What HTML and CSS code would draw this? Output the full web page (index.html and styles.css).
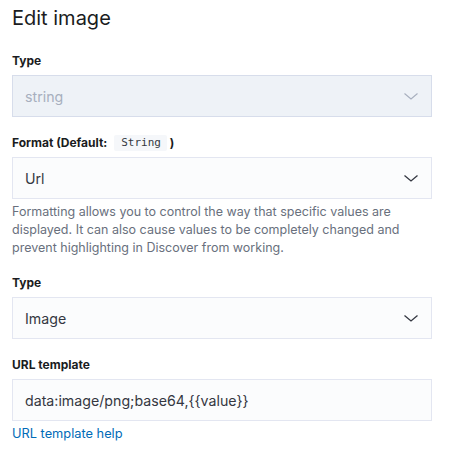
FILE: index.html
```html
<!DOCTYPE html>
<html>
<head>
<meta charset="utf-8">
<link rel="stylesheet" href="styles.css">
</head>
<body>
<div class="page">
  <h2 class="title">Edit image</h2>

  <div class="row">
    <label class="label">Type</label>
    <div class="field field-disabled">
      <span class="value">string</span>
      <svg class="chev" width="16" height="16" viewBox="0 0 16 16"><path d="M1.5 5.5 L8 11 L14.5 5.5" fill="none" stroke="currentColor" stroke-width="1.1"/></svg>
    </div>
  </div>

  <div class="row">
    <label class="label">Format (Default: <code class="code">String</code> )</label>
    <div class="field">
      <span class="value">Url</span>
      <svg class="chev" width="16" height="16" viewBox="0 0 16 16"><path d="M1.5 5.5 L8 11 L14.5 5.5" fill="none" stroke="currentColor" stroke-width="1.3"/></svg>
    </div>
    <p class="help">Formatting allows you to control the way that specific values are displayed. It can also cause values to be completely changed and prevent highlighting in Discover from working.</p>
  </div>

  <div class="row">
    <label class="label">Type</label>
    <div class="field">
      <span class="value">Image</span>
      <svg class="chev" width="16" height="16" viewBox="0 0 16 16"><path d="M1.5 5.5 L8 11 L14.5 5.5" fill="none" stroke="currentColor" stroke-width="1.3"/></svg>
    </div>
  </div>

  <div class="row">
    <label class="label">URL template</label>
    <div class="field">
      <span class="value">data:image/png;base64,{{value}}</span>
    </div>
    <a class="link" href="#">URL template help</a>
  </div>
</div>
</body>
</html>
```

FILE: styles.css
```css
html, body {
  margin: 0;
  padding: 0;
  background: #ffffff;
}

body {
  font-family: Inter, "Noto Sans", sans-serif;
  color: #343741;
}

.page {
  width: 420px;
  padding: 6px 12px 0 12px;
  display: flex;
  flex-direction: column;
}

.title {
  margin: 0 0 23px 0;
  font-size: 20px;
  line-height: 24px;
  font-weight: 400;
  color: #1a1c21;
}

.row {
  display: flex;
  flex-direction: column;
  margin-bottom: 18px;
}

.label {
  font-size: 12px;
  line-height: 16px;
  font-weight: 700;
  color: #1a1c21;
  margin-bottom: 6px;
  display: flex;
  align-items: center;
  white-space: pre;
}

.code {
  font-family: "DejaVu Sans Mono", "Liberation Mono", monospace;
  font-size: 11px;
  font-weight: 400;
  line-height: 16px;
  background: #f5f7fa;
  color: #343741;
  padding: 0 6px 0 7px;
  margin-left: 4px;
  border-radius: 2px;
}

.field {
  height: 42px;
  box-sizing: border-box;
  background: #fbfcfd;
  box-shadow: inset 0 0 0 1px rgba(17, 43, 134, 0.1);
  display: flex;
  align-items: center;
  justify-content: space-between;
  padding: 0 13px;
  font-size: 14.2px;
  color: #343741;
}

.field-disabled {
  background: #eef2f7;
  color: #a7afbe;
}

.field-disabled .chev {
  color: #a7afbe;
}

.chev {
  color: #343741;
  flex: none;
}

.help {
  margin: 4px 0 0 0;
  font-size: 12.5px;
  line-height: 18px;
  color: #69707d;
}

.link {
  margin-top: 4px;
  font-size: 12.8px;
  line-height: 18px;
  color: #006bb8;
  text-decoration: none;
}
```
